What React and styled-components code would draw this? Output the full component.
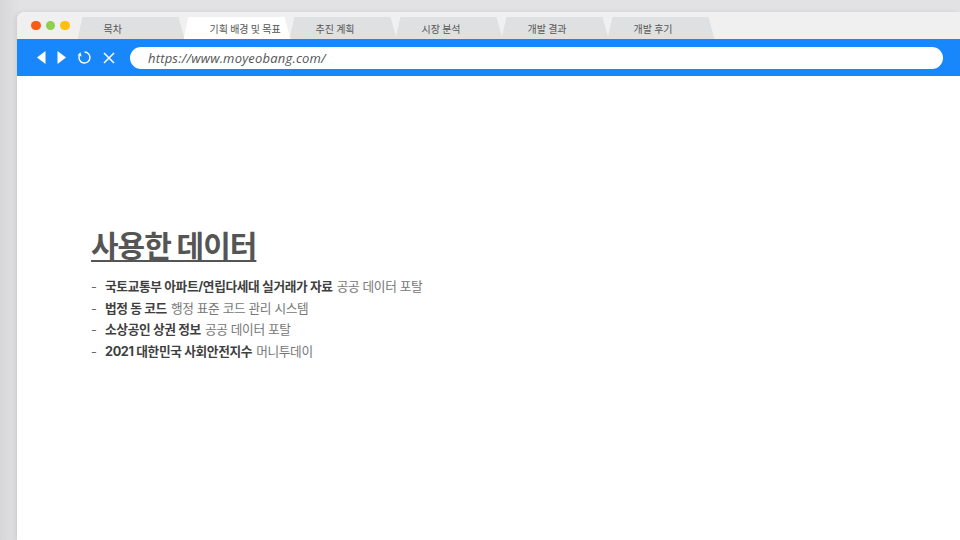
import styled, { createGlobalStyle } from "styled-components";

const tabs = ["목차", "기획 배경 및 목표", "추진 계획", "시장 분석", "개발 결과", "개발 후기"];
const activeTab = 1;

const sources = [
  { name: "국토교통부 아파트/연립다세대 실거래가 자료", from: "공공 데이터 포탈" },
  { name: "법정 동 코드", from: "행정 표준 코드 관리 시스템" },
  { name: "소상공인 상권 정보", from: "공공 데이터 포탈" },
  { name: "2021 대한민국 사회안전지수", from: "머니투데이" },
];

const GlobalStyle = createGlobalStyle`
  html, body {
    margin: 0;
    height: 100%;
  }
  body {
    background: linear-gradient(90deg, #d6d6d8 0%, #e2e2e4 2%, #e2e2e4 100%);
    font-family: Inter, "Noto Sans CJK KR", "Noto Sans", sans-serif;
    overflow: hidden;
  }
  #root {
    height: 100%;
  }
`;

const Page = styled.div`
  height: 100%;
  padding: 12px 0 0 17px;
  box-sizing: border-box;
`;

const Window = styled.div`
  height: 100%;
  background: #fff;
  border-top-left-radius: 8px;
  box-shadow: -2px 0 4px rgba(0, 0, 0, 0.08);
  overflow: hidden;
  display: flex;
  flex-direction: column;
`;

const TabBar = styled.div`
  height: 27px;
  background: #f0f0f0;
  display: flex;
  align-items: flex-end;
  padding-left: 14px;
`;

const Lights = styled.div`
  display: flex;
  gap: 5px;
  align-self: center;
  margin-right: 8px;
`;

const Light = styled.span`
  width: 9.5px;
  height: 9.5px;
  border-radius: 50%;
  background: ${(p) => p.$color};
`;

const Tab = styled.div`
  width: 107px;
  height: 22px;
  margin-right: -1px;
  box-sizing: border-box;
  padding-left: 26px;
  background: ${(p) => (p.$active ? "#fff" : "#dfe0e2")};
  clip-path: polygon(5px 0, calc(100% - 6px) 0, 100% 100%, 0 100%);
  display: flex;
  align-items: center;
  font-family: "Noto Sans CJK KR", sans-serif;
  font-size: 10px;
  color: #555;
  position: relative;
  z-index: ${(p) => (p.$active ? 1 : 0)};
`;

const NavBar = styled.div`
  height: 37px;
  background: #1787fb;
  display: flex;
  align-items: center;
  padding-left: 20px;
`;

const NavButtons = styled.div`
  display: flex;
  align-items: center;
  gap: 11px;
  margin-right: 15px;
  svg {
    display: block;
  }
`;

const Address = styled.div`
  flex: 1;
  height: 22px;
  margin-right: 17px;
  background: #fff;
  border-radius: 11px;
  display: flex;
  align-items: center;
  padding-left: 18px;
  font-family: "Open Sans", "Liberation Sans", sans-serif;
  font-style: italic;
  font-size: 13px;
  color: #555;
  letter-spacing: 0.2px;
`;

const Content = styled.div`
  flex: 1;
  padding: 148px 0 0 74px;
`;

const Heading = styled.h1`
  margin: 0 0 12px;
  font-family: "Noto Sans CJK KR", sans-serif;
  font-size: 30px;
  line-height: 40px;
  font-weight: 700;
  color: #555;
  text-decoration: underline;
  text-decoration-thickness: 2px;
  text-underline-offset: 3px;
  letter-spacing: -1px;
`;

const List = styled.ul`
  list-style: none;
  margin: 0;
  padding: 0;
`;

const Item = styled.li`
  display: flex;
  font-size: 12.7px;
  line-height: 21.6px;
  color: #777;
  letter-spacing: -0.35px;
`;

const Dash = styled.span`
  width: 14px;
  color: #666;
`;

const Name = styled.b`
  color: #3f3f3f;
  font-weight: 700;
  margin-right: 4px;
`;

const Back = () => (
  <svg width="9" height="13" viewBox="0 0 9 13">
    <path d="M8.5 0 L0 6.5 L8.5 13 Z" fill="#fff" />
  </svg>
);

const Forward = () => (
  <svg width="9" height="13" viewBox="0 0 9 13">
    <path d="M0.5 0 L9 6.5 L0.5 13 Z" fill="#fff" />
  </svg>
);

const Reload = () => (
  <svg width="15" height="15" viewBox="0 0 15 15" fill="none">
    <path d="M7.5 2 A5.5 5.5 0 1 1 2.3 5.6" stroke="#fff" strokeWidth="1.4" />
    <path d="M3.4 2.2 L0.6 5.2 L4.6 6.4 Z" fill="#fff" />
  </svg>
);

const Close = () => (
  <svg width="12" height="12" viewBox="0 0 12 12" stroke="#fff" strokeWidth="1.5">
    <path d="M1 1 L11 11 M11 1 L1 11" />
  </svg>
);

export default function App() {
  return (
    <>
      <GlobalStyle />
      <Page>
        <Window>
          <TabBar>
            <Lights>
              <Light $color="#fa5c17" />
              <Light $color="#8cd04c" />
              <Light $color="#fdc00f" />
            </Lights>
            {tabs.map((t, i) => (
              <Tab key={t} $active={i === activeTab}>
                {t}
              </Tab>
            ))}
          </TabBar>
          <NavBar>
            <NavButtons>
              <Back />
              <Forward />
              <Reload />
              <Close />
            </NavButtons>
            <Address>https://www.moyeobang.com/</Address>
          </NavBar>
          <Content>
            <Heading>사용한 데이터</Heading>
            <List>
              {sources.map((s) => (
                <Item key={s.name}>
                  <Dash>-</Dash>
                  <span>
                    <Name>{s.name}</Name>
                    {s.from}
                  </span>
                </Item>
              ))}
            </List>
          </Content>
        </Window>
      </Page>
    </>
  );
}
